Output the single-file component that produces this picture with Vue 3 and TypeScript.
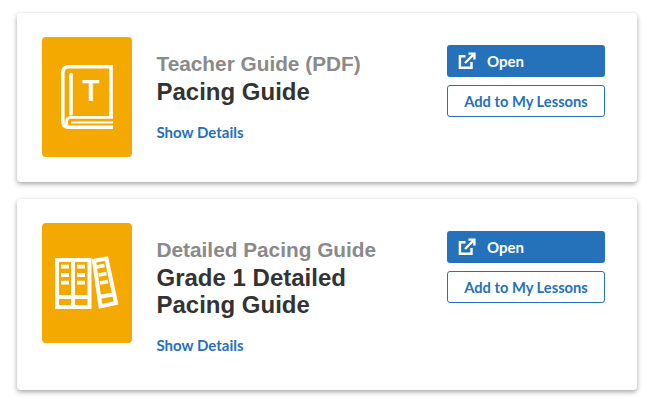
<script setup lang="ts">
interface Resource {
  kind: string;
  title: string[];
  icon: "book" | "binders";
}
const resources: Resource[] = [
  { kind: "Teacher Guide (PDF)", title: ["Pacing Guide"], icon: "book" },
  { kind: "Detailed Pacing Guide", title: ["Grade 1 Detailed", "Pacing Guide"], icon: "binders" },
];
</script>

<template>
  <main class="page">
    <article v-for="r in resources" :key="r.kind" class="card" :class="r.icon">
      <div class="thumb">
        <svg v-if="r.icon === 'book'" class="glyph" width="52" height="64" viewBox="0 0 52 64" fill="none" stroke="#fff">
          <path d="M50 53V1.800H8Q1.800 1.800 1.800 8V56Q1.800 62.300 8.500 62.300H52" stroke-width="3.600" />
          <path d="M52 52.300H10Q5.500 52.300 5.500 57.300Q5.500 59 6.500 60" stroke-width="2.800" />
          <path d="M10 57.400H52" stroke-width="2" />
          <path d="M10 9.500V49" stroke-width="3.600" stroke-linecap="round" />
          <text x="30" y="36" class="t" fill="#fff" stroke="none" text-anchor="middle">T</text>
        </svg>
        <svg v-else class="glyph" width="64" height="56" viewBox="0 0 64 56" fill="none" stroke="#fff">
          <path d="M2 5H34.500V52H2Z M18 5V52 M2 42H34.500" stroke-width="4" />
          <path d="M6 11.700H14M6 20H14M6 27.700H14M22 11.700H30M22 20H30M22 27.700H30" stroke-width="3.800" />
          <path d="M39 5.800 51.500 3.500 61 48 45.500 51.300Z M44 42 59 39.200" stroke-width="4" />
          <path d="M41.500 12 49.500 10.500M43.500 20 51.500 18.500M45 28 53 26.500" stroke-width="3.800" />
        </svg>
      </div>
      <div class="body">
        <p class="kind">{{ r.kind }}</p>
        <h2 class="title"><span v-for="line in r.title" :key="line" class="line">{{ line }}</span></h2>
        <a class="details">Show Details</a>
      </div>
      <div class="actions">
        <button class="btn primary">
          <svg class="ext" width="18" height="18" viewBox="0 0 18 18" fill="none" stroke="#fff" stroke-width="2.400">
            <path d="M7.500 4.300H1.900V15.700H13.500V10" />
            <path d="M7 11 16 2M10.500 1.600H16.400V7.500" />
          </svg>
          <span>Open</span>
        </button>
        <button class="btn outline">Add to My Lessons</button>
      </div>
    </article>
  </main>
</template>

<style scoped>
.page {
  width: 648px;
  height: 405px;
  box-sizing: border-box;
  padding: 13px 11px 0 17px;
  display: flex;
  flex-direction: column;
  gap: 17px;
  background: #fff;
  overflow: hidden;
}
.card {
  box-sizing: border-box;
  width: 620px;
  display: flex;
  align-items: flex-start;
  padding: 24px 32px 24px 25px;
  background: #fff;
  border-radius: 4px;
  box-shadow: 0 2px 5px rgba(0, 0, 0, 0.36);
}
.card.book { height: 169px; }
.card.binders { height: 191px; }
.thumb {
  flex: none;
  width: 90px;
  height: 120px;
  background: #f3a900;
  border-radius: 4px;
  display: flex;
  align-items: center;
  justify-content: center;
}
.t {
  font: 700 29px "Lato", sans-serif;
}
.body {
  flex: 1;
  padding-left: 24.5px;
}
.kind {
  margin: 15px 0 0;
  font: 700 20.8px/24px "Liberation Sans", Arial, sans-serif;
  color: #8a8a8a;
}
.title {
  margin: 2px 0 0;
  font: 700 24px/27px "Liberation Sans", Arial, sans-serif;
  color: #333;
}
.line { display: block; }
.details {
  display: block;
  margin-top: 17px;
  font: 700 15px/20px "Lato", sans-serif;
  color: #2571ba;
}
.actions {
  flex: none;
  width: 158px;
  margin-top: 8px;
  display: flex;
  flex-direction: column;
  gap: 8px;
}
.btn {
  box-sizing: border-box;
  height: 32px;
  border-radius: 3px;
  font: 700 15px "Lato", sans-serif;
  display: flex;
  align-items: center;
  padding: 0;
}
.primary {
  background: #2571ba;
  border: none;
  color: #fff;
  padding-left: 11px;
  gap: 11px;
}
.outline {
  background: #fff;
  border: 1px solid #2571ba;
  color: #2571ba;
  justify-content: center;
  font-size: 14.7px;
}
</style>
